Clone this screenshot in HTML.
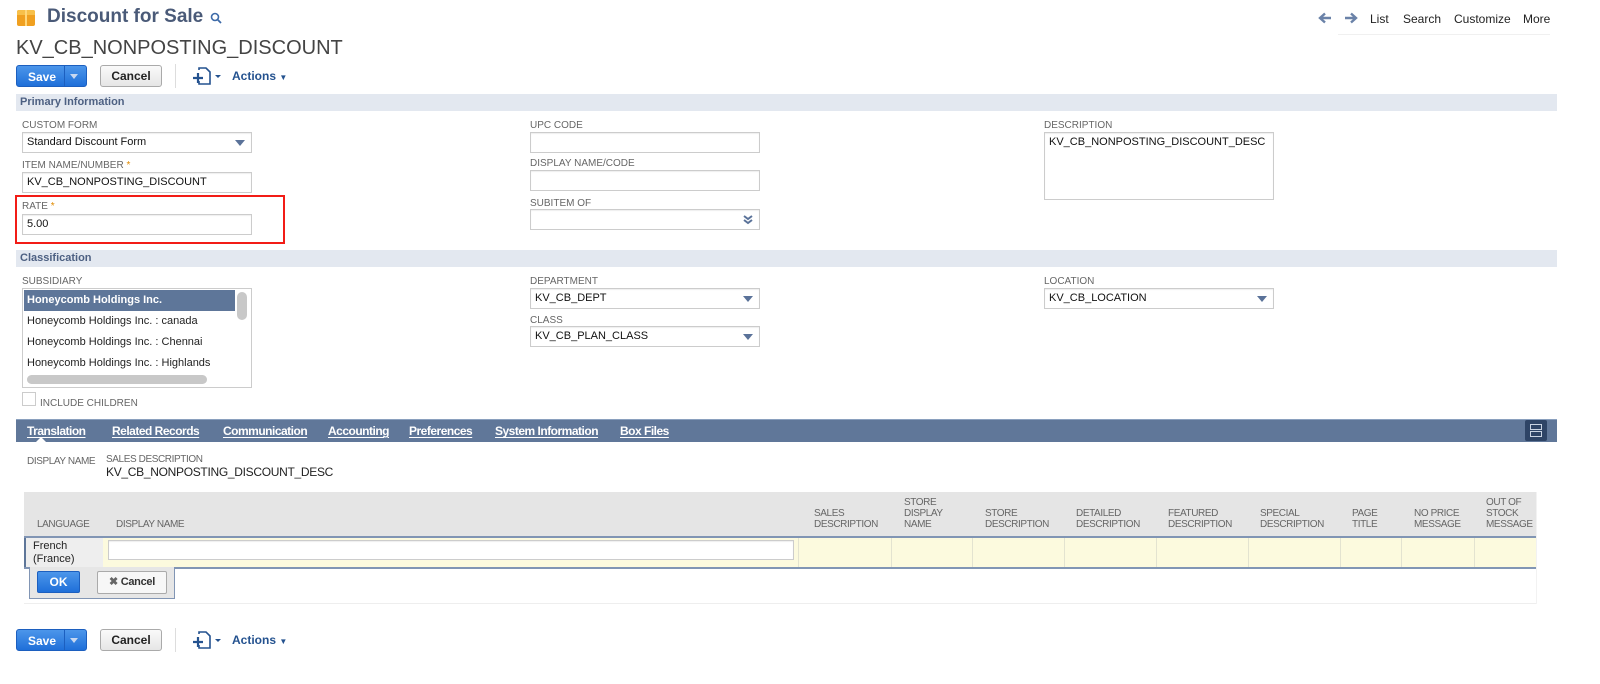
<!DOCTYPE html>
<html><head><meta charset="utf-8"><style>
*{box-sizing:border-box;margin:0;padding:0}
body{width:1600px;height:684px;background:#fff;font-family:"Liberation Sans",Arial,sans-serif;position:relative;overflow:hidden;color:#222}
.a{position:absolute;white-space:nowrap}
.lbl{position:absolute;font-size:10px;color:#666;text-transform:uppercase;white-space:nowrap}
.th{letter-spacing:-0.4px}
.inp{position:absolute;height:21px;border:1px solid #ccc;background:#fff;font-size:11px;padding:3px 4px;white-space:nowrap;color:#111;box-shadow:inset 0 1px 1px #eee}
.arr{position:absolute;right:6px;top:7px;width:0;height:0;border-left:5px solid transparent;border-right:5px solid transparent;border-top:6px solid #5a7299}
.bar{position:absolute;left:16px;width:1541px;height:17px;background:#e3e8f0;font-size:11px;font-weight:bold;color:#4d6082;padding:2px 4px}
.save{position:absolute;width:71px;height:22px;background:linear-gradient(#4c96ea,#1f6fd9);border:1px solid #1c5fbf;border-radius:3px;color:#fff;font-weight:bold;font-size:12px}
.save span{position:absolute;left:11px;top:4px}
.save i{position:absolute;left:47px;top:0;width:1px;height:20px;background:#1c5fbf}
.save b{position:absolute;left:53px;top:8px;border-left:4px solid transparent;border-right:4px solid transparent;border-top:5px solid #c8d8f0}
.cancel{position:absolute;width:62px;height:22px;background:linear-gradient(#fafafa,#e6e6e6);border:1px solid #aaa;border-radius:3px;font-weight:bold;font-size:12px;text-align:center;line-height:20px;color:#222}
.act{position:absolute;font-size:12px;font-weight:bold;color:#24528f}
.tab{position:absolute;top:424px;color:#fff;font-weight:bold;font-size:12px;letter-spacing:-0.5px;text-decoration:underline;text-decoration-thickness:1px;text-underline-offset:2px}
</style></head><body>

<div class="a" style="left:17px;top:10px;width:18px;height:16px;background:#f0a020;border-radius:2px"></div>
<div class="a" style="left:17px;top:10px;width:18px;height:5px;background:#f7c04a;border-radius:2px 2px 0 0"></div>
<div class="a" style="left:25px;top:10px;width:2px;height:16px;background:#ffd77a"></div>
<div class="a" style="left:47px;top:6px;font-size:19px;font-weight:bold;color:#4a5a78">Discount for Sale</div>
<svg class="a" style="left:210px;top:12px" width="12" height="12" viewBox="0 0 12 12"><circle cx="5" cy="5" r="3.5" fill="none" stroke="#3d6aa8" stroke-width="1.6"/><path d="M7.5 7.5L11 11" stroke="#3d6aa8" stroke-width="1.8"/></svg>
<div class="a" style="left:16px;top:37px;font-size:20px;color:#444">KV_CB_NONPOSTING_DISCOUNT</div>

<svg class="a" style="left:1318px;top:12px" width="14" height="12" viewBox="0 0 14 12"><path d="M13 6H3M7 1.5L2 6l5 4.5" fill="none" stroke="#6a82a8" stroke-width="2.4"/></svg>
<svg class="a" style="left:1344px;top:12px" width="14" height="12" viewBox="0 0 14 12"><path d="M1 6h10M7 1.5L12 6l-5 4.5" fill="none" stroke="#6a82a8" stroke-width="2.4"/></svg>
<div class="a" style="left:1370px;top:12px;font-size:12px;color:#222">List</div>
<div class="a" style="left:1403px;top:12px;font-size:12px;color:#222">Search</div>
<div class="a" style="left:1454px;top:12px;font-size:12px;color:#222">Customize</div>
<div class="a" style="left:1523px;top:12px;font-size:12px;color:#222">More</div>
<div class="a" style="left:1338px;top:34px;width:212px;height:1px;background:#f0f0f0"></div>

<div class="save" style="left:16px;top:65px"><span>Save</span><i></i><b></b></div>
<div class="cancel" style="left:100px;top:65px">Cancel</div>
<div class="a" style="left:175px;top:64px;width:1px;height:24px;background:#ddd"></div>
<svg class="a" style="left:192px;top:66px" width="30" height="20" viewBox="0 0 30 20"><path d="M7 4V2h7l4 4v12H7v-3" fill="none" stroke="#24528f" stroke-width="1.6"/><path d="M1 12h10M6 7v10" stroke="#24528f" stroke-width="2.2"/><path d="M23 9h6l-3 3z" fill="#24528f"/></svg>
<div class="act" style="left:232px;top:69px">Actions <span style="font-size:8px">▼</span></div>

<div class="bar" style="top:94px">Primary Information</div>
<div class="lbl" style="left:22px;top:120px">Custom Form</div>
<div class="inp" style="left:22px;top:132px;width:230px">Standard Discount Form<div class="arr"></div></div>
<div class="lbl" style="left:22px;top:160px">Item Name/Number <span style="color:#e08a00">*</span></div>
<div class="inp" style="left:22px;top:172px;width:230px">KV_CB_NONPOSTING_DISCOUNT</div>
<div class="a" style="left:15px;top:195px;width:270px;height:49px;border:2px solid #f21c16"></div>
<div class="lbl" style="left:22px;top:201px">Rate <span style="color:#e08a00">*</span></div>
<div class="inp" style="left:22px;top:214px;width:230px">5.00</div>

<div class="lbl" style="left:530px;top:120px">UPC Code</div>
<div class="inp" style="left:530px;top:132px;width:230px"></div>
<div class="lbl" style="left:530px;top:158px">Display Name/Code</div>
<div class="inp" style="left:530px;top:170px;width:230px"></div>
<div class="lbl" style="left:530px;top:198px">Subitem of</div>
<div class="inp" style="left:530px;top:209px;width:230px"><svg style="position:absolute;right:6px;top:5px" width="10" height="10" viewBox="0 0 10 10"><path d="M1 1l4 3 4-3M1 5l4 3 4-3" fill="none" stroke="#5a7299" stroke-width="2"/></svg></div>
<div class="lbl" style="left:1044px;top:120px">Description</div>
<div class="inp" style="left:1044px;top:132px;width:230px;height:68px">KV_CB_NONPOSTING_DISCOUNT_DESC</div>

<div class="bar" style="top:250px">Classification</div>
<div class="lbl" style="left:22px;top:276px">Subsidiary</div>
<div class="a" style="left:22px;top:288px;width:230px;height:100px;border:1px solid #ccc;font-size:11px">
  <div style="position:absolute;left:1px;top:1px;width:211px;height:21px;background:#5e7699;color:#fff;font-weight:bold;padding:4px 3px">Honeycomb Holdings Inc.</div>
  <div style="position:absolute;left:4px;top:26px">Honeycomb Holdings Inc. : canada</div>
  <div style="position:absolute;left:4px;top:47px">Honeycomb Holdings Inc. : Chennai</div>
  <div style="position:absolute;left:4px;top:68px">Honeycomb Holdings Inc. : Highlands</div>
  <div style="position:absolute;left:214px;top:3px;width:10px;height:28px;background:#c8c8c8;border-radius:5px"></div>
  <div style="position:absolute;left:4px;top:86px;width:180px;height:9px;background:#c8c8c8;border-radius:5px"></div>
</div>
<div class="a" style="left:22px;top:392px;width:14px;height:14px;border:1px solid #ccc"></div>
<div class="lbl" style="left:40px;top:398px">Include Children</div>

<div class="lbl" style="left:530px;top:276px">Department</div>
<div class="inp" style="left:530px;top:288px;width:230px">KV_CB_DEPT<div class="arr"></div></div>
<div class="lbl" style="left:530px;top:315px">Class</div>
<div class="inp" style="left:530px;top:326px;width:230px">KV_CB_PLAN_CLASS<div class="arr"></div></div>
<div class="lbl" style="left:1044px;top:276px">Location</div>
<div class="inp" style="left:1044px;top:288px;width:230px">KV_CB_LOCATION<div class="arr"></div></div>

<div class="a" style="left:16px;top:419px;width:1541px;height:23px;background:#607799;border-top:1px solid #8aa0be"></div>
<div class="tab" style="left:27px">Translation</div>
<div class="a" style="left:36px;top:437px;border-left:5px solid transparent;border-right:5px solid transparent;border-bottom:5px solid #fff"></div>
<div class="tab" style="left:112px">Related Records</div>
<div class="tab" style="left:223px">Communication</div>
<div class="tab" style="left:328px">Accounting</div>
<div class="tab" style="left:409px">Preferences</div>
<div class="tab" style="left:495px">System Information</div>
<div class="tab" style="left:620px">Box Files</div>
<div class="a" style="left:1525px;top:420px;width:22px;height:21px;background:#2e4466;border-radius:2px"></div>
<div class="a" style="left:1530px;top:424px;width:12px;height:6px;border:1px solid #c9d3e2"></div>
<div class="a" style="left:1530px;top:431px;width:12px;height:6px;border:1px solid #c9d3e2"></div>

<div class="lbl th" style="left:27px;top:456px">Display Name</div>
<div class="lbl th" style="left:106px;top:454px">Sales Description</div>
<div class="a" style="left:106px;top:465px;font-size:12px;color:#222;letter-spacing:-0.3px">KV_CB_NONPOSTING_DISCOUNT_DESC</div>

<div class="a" style="left:24px;top:492px;width:1512px;height:44px;background:#e5e5e5"></div>
<div class="a" style="left:24px;top:536px;width:1512px;height:2px;background:#8195b4"></div>
<div class="a" style="left:24px;top:538px;width:1512px;height:29px;background:#fcfade"></div>
<div class="a" style="left:24px;top:567px;width:1512px;height:2px;background:#8195b4"></div>
<div class="a" style="left:24px;top:538px;width:79px;height:29px;background:#eee;border-left:2px solid #5e7699"></div>
<div class="a" style="left:33px;top:540px;font-size:11px;line-height:13px;color:#222">French<br>(France)</div>
<div class="inp" style="left:108px;top:540px;width:686px;height:20px"></div>
<div class="a" style="left:1536px;top:492px;width:1px;height:112px;background:#f2f2f2"></div>
<div class="a" style="left:24px;top:603px;width:1512px;height:1px;background:#eee"></div>
<div class="a" style="left:798px;top:538px;width:1px;height:29px;background:#e3e3d0"></div>
<div class="a" style="left:891px;top:538px;width:1px;height:29px;background:#e3e3d0"></div>
<div class="a" style="left:972px;top:538px;width:1px;height:29px;background:#e3e3d0"></div>
<div class="a" style="left:1064px;top:538px;width:1px;height:29px;background:#e3e3d0"></div>
<div class="a" style="left:1156px;top:538px;width:1px;height:29px;background:#e3e3d0"></div>
<div class="a" style="left:1248px;top:538px;width:1px;height:29px;background:#e3e3d0"></div>
<div class="a" style="left:1340px;top:538px;width:1px;height:29px;background:#e3e3d0"></div>
<div class="a" style="left:1401px;top:538px;width:1px;height:29px;background:#e3e3d0"></div>
<div class="a" style="left:1474px;top:538px;width:1px;height:29px;background:#e3e3d0"></div>
<div class="lbl th" style="left:37px;top:519px">Language</div>
<div class="lbl th" style="left:116px;top:519px">Display Name</div>
<div class="lbl th" style="left:814px;top:508px;line-height:11px">Sales<br>Description</div>
<div class="lbl th" style="left:904px;top:497px;line-height:11px">Store<br>Display<br>Name</div>
<div class="lbl th" style="left:985px;top:508px;line-height:11px">Store<br>Description</div>
<div class="lbl th" style="left:1076px;top:508px;line-height:11px">Detailed<br>Description</div>
<div class="lbl th" style="left:1168px;top:508px;line-height:11px">Featured<br>Description</div>
<div class="lbl th" style="left:1260px;top:508px;line-height:11px">Special<br>Description</div>
<div class="lbl th" style="left:1352px;top:508px;line-height:11px">Page<br>Title</div>
<div class="lbl th" style="left:1414px;top:508px;line-height:11px">No Price<br>Message</div>
<div class="lbl th" style="left:1486px;top:497px;line-height:11px">Out of<br>Stock<br>Message</div>

<div class="a" style="left:29px;top:567px;width:146px;height:32px;background:#e6e6e6;border:1px solid #8195b4;border-top:none"></div>
<div class="a" style="left:37px;top:571px;width:43px;height:22px;background:linear-gradient(#4c96ea,#1f6fd9);border:1px solid #1c5fbf;border-radius:2px;color:#fff;font-weight:bold;font-size:12px;text-align:center;line-height:20px">OK</div>
<div class="a" style="left:97px;top:571px;width:70px;height:23px;background:#f7f7f7;border:1px solid #aaa;border-radius:2px;font-weight:bold;font-size:11px;text-align:center;line-height:21px;color:#333;letter-spacing:-0.3px"><span style="color:#666">✖</span> Cancel</div>

<div class="save" style="left:16px;top:629px"><span>Save</span><i></i><b></b></div>
<div class="cancel" style="left:100px;top:629px">Cancel</div>
<div class="a" style="left:175px;top:628px;width:1px;height:24px;background:#ddd"></div>
<svg class="a" style="left:192px;top:630px" width="30" height="20" viewBox="0 0 30 20"><path d="M7 4V2h7l4 4v12H7v-3" fill="none" stroke="#24528f" stroke-width="1.6"/><path d="M1 12h10M6 7v10" stroke="#24528f" stroke-width="2.2"/><path d="M23 9h6l-3 3z" fill="#24528f"/></svg>
<div class="act" style="left:232px;top:633px">Actions <span style="font-size:8px">▼</span></div>
</body></html>
